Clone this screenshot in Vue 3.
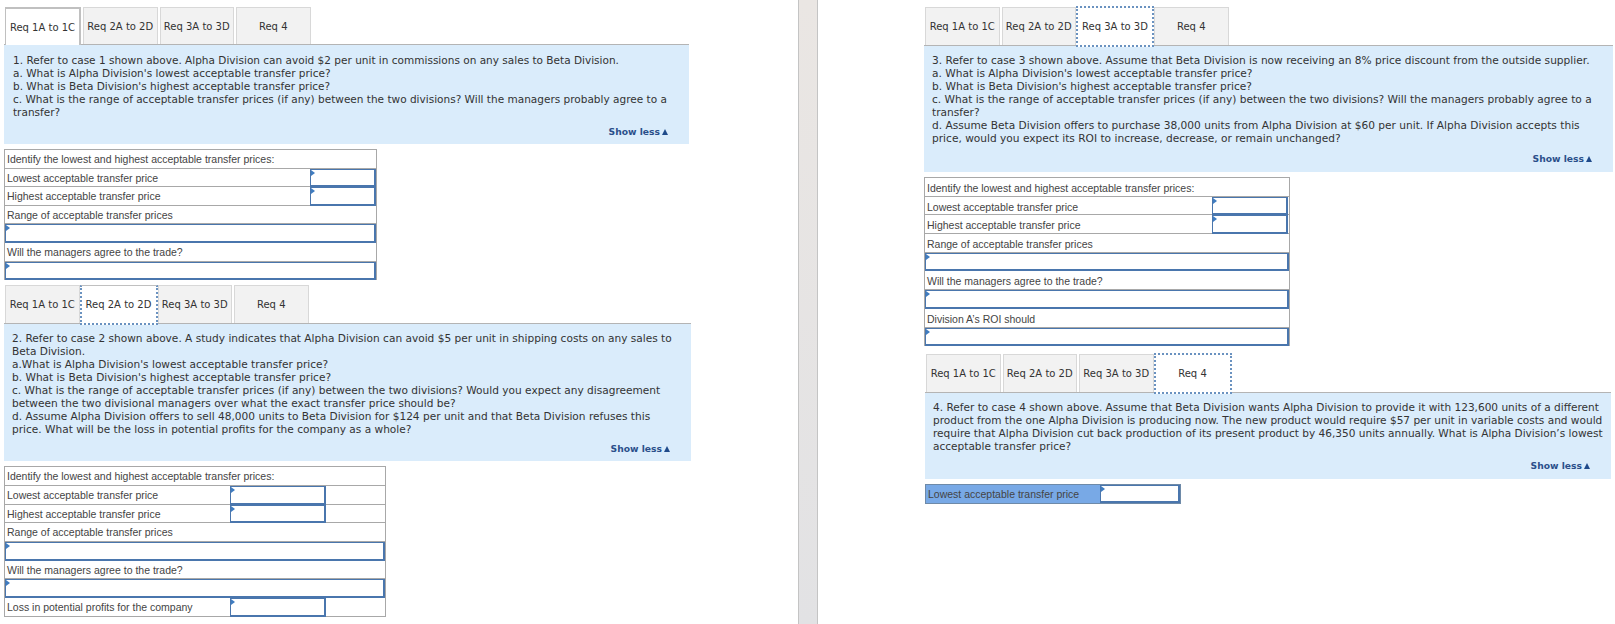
<script setup>
const tabNames = ['Req 1A to 1C', 'Req 2A to 2D', 'Req 3A to 3D', 'Req 4']

const leftPanels = [
  {
    id: 1, active: 0, variant: 'p1',
    lines: [
      '1. Refer to case 1 shown above. Alpha Division can avoid $2 per unit in commissions on any sales to Beta Division.',
      "a. What is Alpha Division's lowest acceptable transfer price?",
      "b. What is Beta Division's highest acceptable transfer price?",
      'c. What is the range of acceptable transfer prices (if any) between the two divisions? Will the managers probably agree to a',
      'transfer?'
    ],
    rows: [
      { t: 'head', label: 'Identify the lowest and highest acceptable transfer prices:' },
      { t: 'pair', label: 'Lowest acceptable transfer price' },
      { t: 'pair', label: 'Highest acceptable transfer price' },
      { t: 'head', label: 'Range of acceptable transfer prices' },
      { t: 'full' },
      { t: 'head', label: 'Will the managers agree to the trade?' },
      { t: 'full' }
    ]
  },
  {
    id: 2, active: 1, variant: 'p2',
    lines: [
      '2. Refer to case 2 shown above. A study indicates that Alpha Division can avoid $5 per unit in shipping costs on any sales to',
      'Beta Division.',
      "a.What is Alpha Division's lowest acceptable transfer price?",
      "b. What is Beta Division's highest acceptable transfer price?",
      'c. What is the range of acceptable transfer prices (if any) between the two divisions? Would you expect any disagreement',
      'between the two divisional managers over what the exact transfer price should be?',
      'd. Assume Alpha Division offers to sell 48,000 units to Beta Division for $124 per unit and that Beta Division refuses this',
      'price. What will be the loss in potential profits for the company as a whole?'
    ],
    rows: [
      { t: 'head', label: 'Identify the lowest and highest acceptable transfer prices:' },
      { t: 'pair', label: 'Lowest acceptable transfer price' },
      { t: 'pair', label: 'Highest acceptable transfer price' },
      { t: 'head', label: 'Range of acceptable transfer prices' },
      { t: 'full' },
      { t: 'head', label: 'Will the managers agree to the trade?' },
      { t: 'full' },
      { t: 'pair', label: 'Loss in potential profits for the company' }
    ]
  }
]

const rightPanels = [
  {
    id: 3, active: 2, variant: 'p3',
    lines: [
      '3. Refer to case 3 shown above. Assume that Beta Division is now receiving an 8% price discount from the outside supplier.',
      "a. What is Alpha Division's lowest acceptable transfer price?",
      "b. What is Beta Division's highest acceptable transfer price?",
      'c. What is the range of acceptable transfer prices (if any) between the two divisions? Will the managers probably agree to a',
      'transfer?',
      'd. Assume Beta Division offers to purchase 38,000 units from Alpha Division at $60 per unit. If Alpha Division accepts this',
      'price, would you expect its ROI to increase, decrease, or remain unchanged?'
    ],
    rows: [
      { t: 'head', label: 'Identify the lowest and highest acceptable transfer prices:' },
      { t: 'pair', label: 'Lowest acceptable transfer price' },
      { t: 'pair', label: 'Highest acceptable transfer price' },
      { t: 'head', label: 'Range of acceptable transfer prices' },
      { t: 'full' },
      { t: 'head', label: 'Will the managers agree to the trade?' },
      { t: 'full' },
      { t: 'head', label: 'Division A\u2019s ROI should' },
      { t: 'full' }
    ]
  },
  {
    id: 4, active: 3, variant: 'p4',
    lines: [
      '4. Refer to case 4 shown above. Assume that Beta Division wants Alpha Division to provide it with 123,600 units of a different',
      'product from the one Alpha Division is producing now. The new product would require $57 per unit in variable costs and would',
      'require that Alpha Division cut back production of its present product by 46,350 units annually. What is Alpha Division\u2019s lowest',
      'acceptable transfer price?'
    ],
    rows: [{ t: 'pair', label: 'Lowest acceptable transfer price', hl: true }]
  }
]
</script>

<template>
  <div class="page">
    <div class="col col-left">
      <section v-for="p in leftPanels" :key="p.id" class="panel" :class="p.variant">
        <div class="tabs">
          <div
            v-for="(name, i) in tabNames"
            :key="name"
            class="tab"
            :class="{ active: i === p.active, dotted: i === p.active && p.active > 0 }"
          >{{ name }}</div>
        </div>
        <div class="note">
          <div v-for="l in p.lines" :key="l" class="line">{{ l }}</div>
          <div class="less">Show less<span class="tri"></span></div>
        </div>
        <div class="sheet">
          <div v-for="(r, i) in p.rows" :key="i" class="row" :class="[r.t, { hl: r.hl }]">
            <div v-if="r.label" class="label">{{ r.label }}</div>
            <div v-if="r.t !== 'head'" class="field"></div>
            <div v-if="r.t === 'pair'" class="rest"></div>
          </div>
        </div>
      </section>
    </div>
    <div class="divider"></div>
    <div class="col col-right">
      <section v-for="p in rightPanels" :key="p.id" class="panel" :class="p.variant">
        <div class="tabs">
          <div
            v-for="(name, i) in tabNames"
            :key="name"
            class="tab"
            :class="{ active: i === p.active, dotted: i === p.active && p.active > 0 }"
          >{{ name }}</div>
        </div>
        <div class="note">
          <div v-for="l in p.lines" :key="l" class="line">{{ l }}</div>
          <div class="less">Show less<span class="tri"></span></div>
        </div>
        <div class="sheet">
          <div v-for="(r, i) in p.rows" :key="i" class="row" :class="[r.t, { hl: r.hl }]">
            <div v-if="r.label" class="label">{{ r.label }}</div>
            <div v-if="r.t !== 'head'" class="field"></div>
            <div v-if="r.t === 'pair'" class="rest"></div>
          </div>
        </div>
      </section>
    </div>
  </div>
</template>

<style>
html, body { margin: 0; background: #fff; }
</style>

<style scoped>
.page {
  display: flex;
  width: 1615px;
  height: 624px;
  overflow: hidden;
  background: #fff;
  color: #333;
}
.col-left { width: 798px; padding: 7px 0 0 4px; box-sizing: border-box; }
.col-right { width: 797px; padding: 7px 0 0 106px; box-sizing: border-box; }
.divider {
  width: 20px;
  box-sizing: border-box;
  background: linear-gradient(#eae6e3, #e2e2e4);
  border-left: 1px solid #c4c4c4;
  border-right: 1px solid #c4c4c4;
}
.panel { margin-bottom: 5px; }
.tabs {
  display: flex;
  gap: 2px;
  height: 38px;
  padding-left: 1px;
  border-bottom: 1px solid #b4b4b4;
  font: 10px "DejaVu Sans", Verdana, sans-serif;
}
.tab {
  width: 74.5px;
  box-sizing: border-box;
  height: 100%;
  display: flex;
  align-items: center;
  justify-content: center;
  background: #f2f2f2;
  border: 1px solid #d8d8d8;
  border-bottom: none;
  white-space: nowrap;
}
.tab.active {
  width: 76px;
  background: #fff;
  height: calc(100% + 1px);
  border-color: #c0c0c0;
  border-width: 2px 2px 0 1px;
}
.tab.dotted {
  position: relative;
  z-index: 1;
  width: 78px;
  height: calc(100% + 3px);
  margin: -1px -2px 0;
  border: 2px dotted #6a92c0;
}
.note {
  background: #daecfb;
  padding: 8px 9px 6px 8px;
  font: 10.55px/13px "DejaVu Sans", Verdana, sans-serif;
  color: #333;
}
.line { white-space: nowrap; }
.less {
  margin-top: 6px;
  height: 14px;
  line-height: 14px;
  text-align: right;
  padding-right: 12px;
  font-size: 9.2px;
  font-weight: 700;
  color: #2a4f8a;
}
.tri {
  display: inline-block;
  margin-left: 2px;
  width: 0;
  height: 0;
  border-left: 3.5px solid transparent;
  border-right: 3.5px solid transparent;
  border-bottom: 6px solid #1f4a8a;
}
.sheet {
  margin-top: 5px;
  border: 1px solid #a8a8a8;
  border-bottom-width: 0;
  font: 10.5px "Liberation Sans", Arial, sans-serif;
  color: #444;
}
.row {
  display: flex;
  height: 18.6px;
  box-sizing: border-box;
  border-bottom: 1px solid #a8a8a8;
}
.label {
  flex: 1;
  box-sizing: border-box;
  padding-left: 2px;
  line-height: 19px;
  white-space: nowrap;
}
.field {
  position: relative;
  box-sizing: border-box;
  flex: 1;
  background: #fff;
  border: solid #4a76ad;
  border-width: 1px 2px 2px 1px;
  margin-bottom: -1px;
}
.field::before {
  content: "";
  position: absolute;
  left: 0;
  top: 0;
  border-top: 3px solid transparent;
  border-bottom: 3px solid transparent;
  border-left: 4px solid #3f7cc0;
}
.rest { display: none; }
.row.pair .label, .row.pair .field { flex: none; }

.p1 { width: 685px; }
.p1 .tabs { height: 37px; }
.p1 .note { padding: 9px 9px 5px 9px; font-size: 10.52px; }
.p1 .sheet { width: 371px; }
.p1 .row.pair .label { width: 305px; }
.p1 .row.pair .field { width: 66px; }

.p2 { width: 687px; }
.p2 .note { padding-bottom: 5px; font-size: 10.58px; }
.p2 .sheet { width: 380px; }
.p2 .row { height: 18.7px; }
.p2 .tab.dotted { margin-top: 0; height: calc(100% + 2px); border-top: 1px solid #c0c0c0; }
.p2 .row.pair .label { width: 225px; }
.p2 .row.pair .field { width: 96px; }
.p2 .row.pair .rest { display: block; flex: 1; }

.p3 { width: 689px; margin-bottom: 7.7px; }
.p3 .note { font-size: 10.62px; }
.p3 .less { margin-top: 7px; }
.p3 .sheet { width: 364px; }
.p3 .row { height: 18.7px; }
.p3 .label { line-height: 20px; }
.p3 .row.pair .label { width: 287px; }
.p3 .row.pair .field { width: 76px; }

.p4 { width: 686px; margin-left: 1px; }
.p4 .note { font-size: 10.56px; }
.p4 .sheet { width: 254px; border-color: #6e8aa8; border-bottom-width: 1px; }
.p4 .row.hl { height: 18px; border-bottom: none; background: #78a9e6; }
.p4 .row.pair .label { width: 174px; }
.p4 .row.pair .field { width: 80px; margin-bottom: 0; }
</style>
